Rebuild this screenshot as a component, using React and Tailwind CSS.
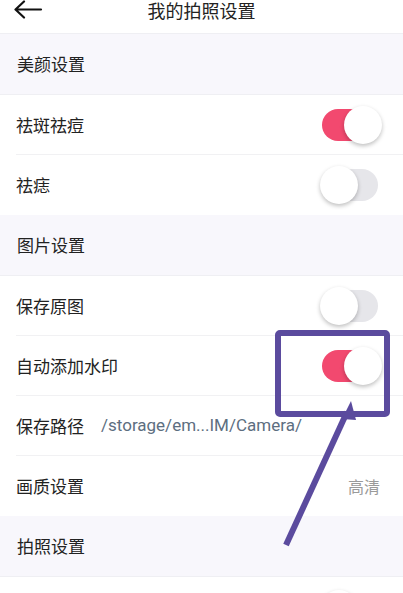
import React from "react";

const font = { fontFamily: '"Noto Sans CJK SC", "Noto Sans", sans-serif' };

function Toggle({ on }) {
  return (
    <div className="relative w-[62px] h-[40px] shrink-0">
      <div
        className={
          "absolute left-[2px] right-[4px] top-[4px] bottom-[4px] rounded-full " +
          (on ? "bg-[#f2496f]" : "bg-[#e6e6ea]")
        }
      />
      <div
        className={
          "absolute top-[1px] w-[38px] h-[38px] rounded-full bg-white shadow-[0_2px_4px_rgba(0,0,0,0.25)] " +
          (on ? "right-0" : "left-0")
        }
      />
    </div>
  );
}

function Section({ title }) {
  return (
    <div className="h-[61px] bg-[#f8f7fc] border-b border-[#efeff3] flex items-center pl-[17px] text-[17px] text-[#222]">
      {title}
    </div>
  );
}

function Row({ label, children, last }) {
  return (
    <div className="h-[60px] bg-white pl-[16px]">
      <div
        className={
          "h-full flex items-center justify-between pr-[21px] " +
          (last ? "" : "border-b border-[#f1f1f3]")
        }
      >
        <div className="flex items-center text-[17px] text-[#222]">{label}</div>
        {children}
      </div>
    </div>
  );
}

export default function App() {
  return (
    <div className="relative w-[403px] h-[593px] overflow-hidden bg-white" style={font}>
      {/* header */}
      <div className="h-[34px] border-b border-[#efeff3] bg-white relative">
        <div className="h-[20px] flex items-center justify-center text-[18px] text-[#222]">
          我的拍照设置
        </div>
        <svg className="absolute left-[13px] top-0" width="30" height="20" viewBox="0 0 30 20">
          <path d="M28 9.5H3M11 1.5L2.5 9.5L11 17.5" fill="none" stroke="#111" strokeWidth="2.2" strokeLinecap="round" strokeLinejoin="round" />
        </svg>
      </div>

      <Section title="美颜设置" />
      <Row label="祛斑祛痘">
        <Toggle on />
      </Row>
      <Row label="祛痣" last>
        <Toggle />
      </Row>

      <Section title="图片设置" />
      <Row label="保存原图">
        <Toggle />
      </Row>
      <Row label="自动添加水印">
        <Toggle on />
      </Row>
      <Row
        label={
          <>
            保存路径
            <span
              className="ml-[17px] text-[17px] text-[#5d6e80]"
              style={{ fontFamily: 'Roboto, "Noto Sans CJK SC", sans-serif' }}
            >
              /storage/em...IM/Camera/
            </span>
          </>
        }
      />
      <Row label="画质设置" last>
        <span className="text-[16px] text-[#9a9a9a] pr-[2px]">高清</span>
      </Row>

      <Section title="拍照设置" />
      <div className="h-[60px] bg-white flex justify-end items-start pt-[12px] pr-[21px]">
        <Toggle />
      </div>

      {/* annotation */}
      <svg className="absolute left-0 top-0 pointer-events-none" width="403" height="593" viewBox="0 0 403 593">
        <rect x="278" y="333" width="109" height="81" rx="2" fill="none" stroke="#5b4b9e" strokeWidth="6" />
        <line x1="286" y1="545" x2="347" y2="412" stroke="#5b4b9e" strokeWidth="6" />
        <polygon points="351,401 342,419 356,420" fill="#5b4b9e" />
      </svg>
    </div>
  );
}
